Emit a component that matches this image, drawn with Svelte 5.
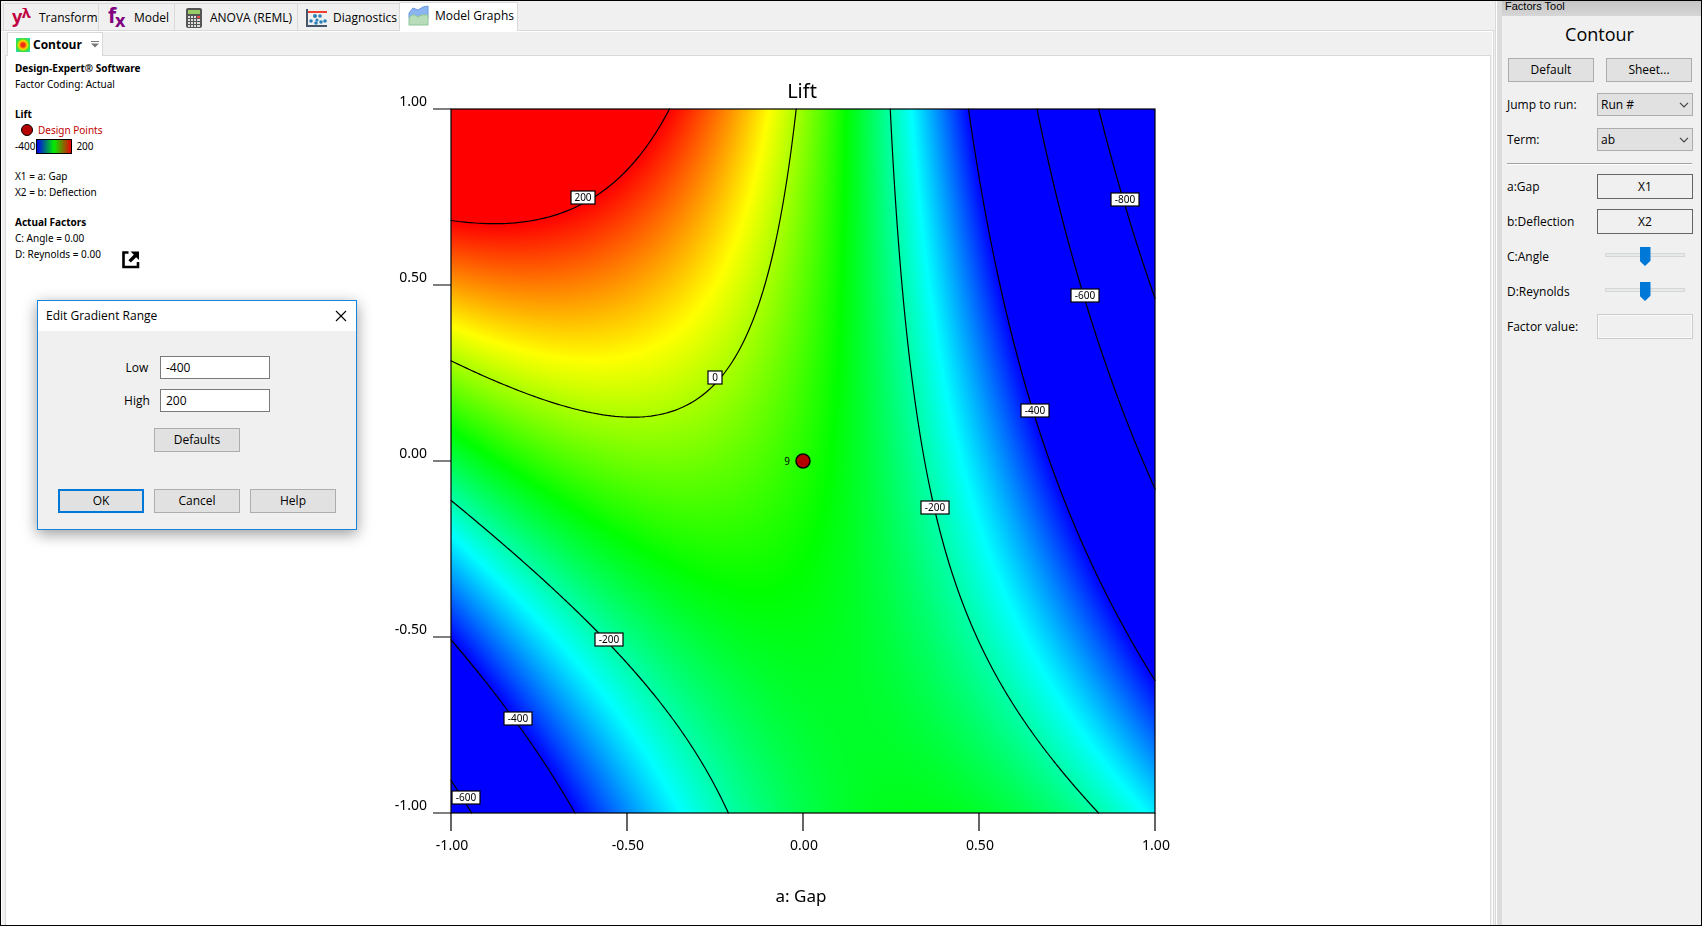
<script>
  import { onMount } from 'svelte';

  // Samples of the response surface, in thirds of a plot unit (0..2112 on each axis).
  const SPAN = 2112;
  const samples = [
    [200, 1, [655,0, 609,78, 577,127, 529,184, 479,230, 433,263, 394,284, 349,306, 299,322, 252,334, 199,341, 129,345, 59,342, 0,335]],
    [0, 1, [1035,0, 1023,107, 1010,197, 999,272, 977,392, 949,502, 919,597, 889,672, 854,740, 815,800, 791,830, 744,870, 694,899, 639,917, 601,925, 544,928, 479,923, 402,909, 319,886, 229,855, 149,822, 99,800, 0,755]],
    [-200, 1, [1318,0, 1324,132, 1332,262, 1344,422, 1357,572, 1377,772, 1389,882, 1420,1058, 1443,1174, 1453,1216, 1487,1338, 1525,1448, 1585,1603, 1655,1738, 1705,1823, 1785,1933, 1855,2013, 1940,2112]],
    [-400, 1, [1553,0, 1575,137, 1595,262, 1625,412, 1660,582, 1695,722, 1738,884, 1753,927, 1795,1058, 1855,1213, 1925,1368, 2005,1523, 2065,1638, 2112,1712]],
    [-600, 1, [1758,0, 1795,172, 1835,332, 1891,542, 1905,584, 1955,732, 2015,902, 2075,1058, 2112,1138]],
    [-800, 1, [1944,0, 1975,127, 2011,252, 2023,294, 2065,432, 2112,570]],
    [-200, 1, [0,1176, 79,1238, 199,1343, 309,1443, 435,1570, 477,1612, 579,1723, 659,1823, 729,1928, 789,2023, 835,2112]],
    [-400, 1, [0,1595, 79,1683, 169,1806, 201,1851, 279,1958, 339,2050, 373,2112]],
    [-600, 1, [0,2016, 19,2046, 49,2088, 62,2112]],
    [50, 0.3, [954,0, 919,142, 884,292, 819,467, 759,582, 669,667, 569,727, 479,747, 369,740, 219,717, 69,672, 0,642]],
    [-100, 0.3, [1180,0, 1173,372, 1160,572, 1150,772, 1135,972, 1115,1158, 1095,1268, 419,1223, 529,1288, 669,1368, 799,1418, 919,1438]],
    [-250, 0.3, [1375,0, 1400,222, 1430,472, 1460,672, 1490,872, 1535,1058, 1590,1258, 1640,1388, 1710,1568, 1815,1758, 1915,1908, 2085,2108, 0,1283, 189,1443, 389,1658, 529,1818, 679,2112]],
    [-106, 0.3, [1355,2108]],
    [-140, 0.2, [1055,2108]],
    [-78, 0.3, [1056,1056]]
  ];

  const powers = [];
  for (let i = 0; i <= 4; i++) for (let j = 0; i + j <= 4; j++) powers.push([i, j]);
  const terms = (a, b) => powers.map(([i, j]) => a ** i * b ** j);

  // Weighted least squares through the normal equations.
  function fit() {
    const n = powers.length;
    const m = Array.from({ length: n }, () => new Array(n + 1).fill(0));
    for (const [value, weight, pts] of samples) {
      for (let k = 0; k < pts.length; k += 2) {
        const t = terms((pts[k] / SPAN) * 2 - 1, 1 - (pts[k + 1] / SPAN) * 2);
        for (let r = 0; r < n; r++) {
          for (let c = 0; c < n; c++) m[r][c] += weight * t[r] * t[c];
          m[r][n] += weight * t[r] * value;
        }
      }
    }
    for (let c = 0; c < n; c++) {
      let p = c;
      for (let r = c + 1; r < n; r++) if (Math.abs(m[r][c]) > Math.abs(m[p][c])) p = r;
      [m[c], m[p]] = [m[p], m[c]];
      for (let r = 0; r < n; r++) {
        if (r === c) continue;
        const f = m[r][c] / m[c][c];
        for (let k = c; k <= n; k++) m[r][k] -= f * m[c][k];
      }
    }
    return m.map((row, i) => row[n] / row[i]);
  }
  const coef = fit();
  function lift(a, b) {
    let s = 0;
    for (let k = 0; k < powers.length; k++) s += coef[k] * a ** powers[k][0] * b ** powers[k][1];
    return s;
  }

  const SIZE = 704;
  const CELLS = 176;
  const grid = [];
  for (let r = 0; r <= CELLS; r++) {
    const row = [];
    for (let c = 0; c <= CELLS; c++) row.push(lift((c / CELLS) * 2 - 1, 1 - (r / CELLS) * 2));
    grid.push(row);
  }

  function isoline(level) {
    const u = SIZE / CELLS;
    let d = '';
    for (let r = 0; r < CELLS; r++) {
      for (let c = 0; c < CELLS; c++) {
        const corners = [[c, r], [c + 1, r], [c + 1, r + 1], [c, r + 1]];
        const hits = [];
        for (let e = 0; e < 4; e++) {
          const [x0, y0] = corners[e];
          const [x1, y1] = corners[(e + 1) % 4];
          const v0 = grid[y0][x0] - level;
          const v1 = grid[y1][x1] - level;
          if (v0 < 0 !== v1 < 0) {
            const t = v0 / (v0 - v1);
            hits.push(`${((x0 + (x1 - x0) * t) * u).toFixed(2)} ${((y0 + (y1 - y0) * t) * u).toFixed(2)}`);
          }
        }
        if (hits.length >= 2) d += `M${hits[0]}L${hits[1]}`;
      }
    }
    return d;
  }
  const isolines = [200, 0, -200, -400, -600, -800].map(isoline);

  let low = $state('-400');
  let high = $state('200');
  let canvas;

  onMount(() => {
    const ctx = canvas.getContext('2d');
    const img = ctx.createImageData(SIZE, SIZE);
    const clamp = (v) => Math.max(0, Math.min(1, v));
    for (let y = 0; y < SIZE; y++) {
      for (let x = 0; x < SIZE; x++) {
        const v = lift((x / SIZE) * 2 - 1, 1 - (y / SIZE) * 2);
        const t = clamp((v - Number(low)) / (Number(high) - Number(low))) * 4;
        const k = (y * SIZE + x) * 4;
        img.data[k] = 255 * clamp(t - 2);
        img.data[k + 1] = 255 * Math.min(clamp(t), clamp(4 - t));
        img.data[k + 2] = 255 * clamp(2 - t);
        img.data[k + 3] = 255;
      }
    }
    ctx.putImageData(img, 0, 0);
  });

  const ticks = [0, 1, 2, 3, 4].map((i) => ({ at: i * 176, x: (i / 2 - 1).toFixed(2), y: (1 - i / 2).toFixed(2) }));
  const flags = [
    [200, 132, 89], [0, 264, 269], [-800, 674, 91], [-600, 634, 187], [-400, 584, 302],
    [-200, 484, 399], [-200, 158, 531], [-400, 67, 610], [-600, 15, 689]
  ];
</script>

<div class="app">
  <main>
    <nav class="tabs">
      <button style:width="95px">
        <svg width="22" height="20" viewBox="0 0 22 20" fill="#c00040" font-family="Noto Sans" font-weight="700"><text x="0" y="15" font-size="18">y</text><text x="10" y="10" font-size="15">λ</text></svg>
        Transform
      </button>
      <button style:width="76px">
        <svg width="22" height="22" viewBox="0 0 22 22" fill="#800080" font-family="Noto Sans" font-weight="700"><text x="1" y="16" font-size="21">f</text><text x="8" y="20" font-size="18">x</text></svg>
        Model
      </button>
      <button style:width="123px">
        <svg width="22" height="22" viewBox="-2 0 22 22"><rect x="1" y="1" width="16" height="20" rx="2" fill="#555" /><rect x="3" y="3" width="12" height="4" fill="#9c6" /><g fill="#ddd"><path d="M3 9h2v2H3zM6 9h2v2H6zM9 9h2v2H9zM3 12h2v2H3zM6 12h2v2H6zM9 12h2v2H9zM12 12h3v2h-3zM3 15h2v2H3zM6 15h2v2H6zM9 15h2v2H9zM12 15h3v2h-3zM3 18h2v2H3zM6 18h2v2H6zM9 18h2v2H9zM12 18h3v2h-3z" /></g><path d="M12 9h3v2h-3z" fill="#e44" /></svg>
        ANOVA (REML)
      </button>
      <button style:width="102px">
        <svg width="22" height="20" viewBox="0 0 22 20"><path d="M1 4h20" stroke="#f04030" stroke-width="2" /><path d="M1 1v17h20" fill="none" stroke="#445568" stroke-width="2" /><g fill="#2980b9"><circle cx="5" cy="13" r="1.800" /><circle cx="9" cy="8" r="2" /><circle cx="10" cy="15" r="1.800" /><circle cx="11" cy="12" r="1.600" /><circle cx="14" cy="8" r="1.800" /><circle cx="15" cy="14" r="1.800" /><circle cx="19" cy="13" r="1.800" /></g></svg>
        Diagnostics
      </button>
      <button class="on" style:width="119px">
        <svg width="22" height="22" viewBox="0 0 22 22"><path d="M1 8 5 3l5 2 5-3 5-1v12H1z" fill="#8ab4f0" stroke="#6a9ae0" /><path d="M1 13c3-4 5-4 9-1 4-3 6-2 10-2v10H1z" fill="#b7dcb9" stroke="#8cc49a" /></svg>
        Model Graphs
      </button>
    </nav>
    <div class="outer">
      <div class="subtabs">
        <button><i class="spot"></i>Contour<svg class="drop" width="8" height="7" viewBox="0 0 8 7"><path d="M0 .5h8" stroke="#777" /><path d="M0 2.500h8L4 6.500z" fill="#777" /></svg></button>
      </div>
      <div class="sheet">
        <section class="legend">
          <div><b>Design-Expert® Software</b><span>Factor Coding: Actual</span></div>
          <div>
            <b>Lift</b>
            <span class="pts"><i></i>Design Points</span>
            <span class="ramp">-400<i></i>200</span>
          </div>
          <div><span>X1 = a: Gap</span><span>X2 = b: Deflection</span></div>
          <div><b>Actual Factors</b><span>C: Angle = 0.00</span>
            <span class="last">D: Reynolds = 0.00
              <svg width="18" height="18" viewBox="0 0 18 18"><path d="M6.500 1.500h-5v14.500h14.500v-5" fill="none" stroke="#000" stroke-width="2.600" /><path d="M8.500 0.500H17v8.500l-2.800-2.800-5.400 5.400-2.400-2.400 5.400-5.400z" /></svg>
            </span>
          </div>
        </section>
        <figure>
          <div class="plot">
            <canvas bind:this={canvas} width={SIZE} height={SIZE}></canvas>
            <svg viewBox="0 0 704 704">
              <g fill="none" stroke="#000" stroke-width="1.200" stroke-linecap="round">
                {#each isolines as d}<path {d} />{/each}
              </g>
              <rect x="0" y="0" width="704" height="704" fill="none" stroke="#000" stroke-width="1.200" />
              {#each ticks as t}
                <path d="M-18 {t.at}H0M{t.at} 704v18" stroke="#000" stroke-width="1.200" />
                <text class="num" x="-24" y={t.at - 3} text-anchor="end">{t.y}</text>
                <text class="num" x={t.at + 1} y="741" text-anchor="middle">{t.x}</text>
              {/each}
              {#each flags as [v, x, y]}
                {@const w = v < 0 ? 28 : v ? 24 : 14}
                <rect x={x - w / 2} y={y - 7} width={w} height="13" fill="#fff" stroke="#000" stroke-width="1.200" />
                <text class="flag" {x} y={y + 3} text-anchor="middle">{v}</text>
              {/each}
              <text class="flag" x="336" y="356" text-anchor="middle">9</text>
              <circle cx="352" cy="352" r="7" fill="#b40000" stroke="#000" stroke-width="1.500" />
              <text class="title" x="351" y="-11" text-anchor="middle">Lift</text>
              <text class="axis" x="350" y="793" text-anchor="middle">a: Gap</text>
            </svg>
          </div>
        </figure>
      </div>
    </div>
  </main>

  <aside>
    <header>Factors Tool</header>
    <h2>Contour</h2>
    <div class="pair"><button class="btn">Default</button><button class="btn">Sheet...</button></div>
    <div class="row"><label for="run">Jump to run:</label>
      <span class="sel"><select id="run"><option>Run #</option></select><svg width="10" height="6" viewBox="0 0 10 6"><path d="M1 .8 5 4.800l4-4" fill="none" stroke="#444" stroke-width="1.200" /></svg></span></div>
    <div class="row"><label for="term">Term:</label>
      <span class="sel"><select id="term"><option>ab</option></select><svg width="10" height="6" viewBox="0 0 10 6"><path d="M1 .8 5 4.800l4-4" fill="none" stroke="#444" stroke-width="1.200" /></svg></span></div>
    <hr />
    <div class="row"><label for="gap">a:Gap</label><button id="gap" class="axisbtn">X1</button></div>
    <div class="row"><label for="defl">b:Deflection</label><button id="defl" class="axisbtn">X2</button></div>
    <div class="row"><label for="angle">C:Angle</label><input id="angle" type="range" min="-1" max="1" step="0.01" value="0" /></div>
    <div class="row"><label for="rey">D:Reynolds</label><input id="rey" type="range" min="-1" max="1" step="0.01" value="0" /></div>
    <div class="row"><label for="fv">Factor value:</label><input id="fv" class="fv" type="text" disabled /></div>
  </aside>

  <div class="dialog" role="dialog" aria-labelledby="dlg-title">
    <div class="bar"><span id="dlg-title">Edit Gradient Range</span>
      <button aria-label="Close"><svg width="12" height="12" viewBox="0 0 12 12"><path d="M1 1l10 10M11 1 1 11" stroke="#000" stroke-width="1.100" /></svg></button></div>
    <div class="body">
      <div class="field"><label for="low">Low</label><input id="low" type="text" bind:value={low} /></div>
      <div class="field"><label for="high">High</label><input id="high" type="text" bind:value={high} /></div>
      <button class="btn defaults">Defaults</button>
      <div class="actions"><button class="btn primary">OK</button><button class="btn">Cancel</button><button class="btn">Help</button></div>
    </div>
  </div>
</div>

<style>
  :global(body) { margin: 0; }
  .app, .app * { box-sizing: border-box; }
  .app { position: relative; display: flex; height: 100vh; overflow: hidden; border: 1px solid #000; background: #f0f0f0; color: #000; font: 12px/16px "Noto Sans", "Open Sans", sans-serif; }
  button, input, select { font: inherit; color: inherit; margin: 0; }
  i { display: inline-block; }
  main { flex: 1; min-width: 0; display: flex; flex-direction: column; padding: 1px 3px 0 0; }
  .tabs { display: flex; align-items: flex-end; padding-left: 2px; height: 28px; }
  .tabs button { display: flex; align-items: center; gap: 5px; height: 27px; padding: 2px 0 0 8px; border: 1px solid #d9d9d9; border-right: 0; border-bottom: 0; background: #f0f0f0; white-space: nowrap; font-family: "Open Sans", sans-serif; }
  .tabs svg { flex: none; }
  .tabs .on { height: 29px; margin-bottom: -1px; padding: 0 0 2px 8px; background: #fff; border-right: 1px solid #d9d9d9; z-index: 1; }
  .outer { flex: 1; min-height: 0; display: flex; flex-direction: column; padding: 1px 2px 0 2px; border: 1px solid #d9d9d9; border-width: 1px 1px 0 0; box-shadow: inset 1px 1px #fff, inset -1px 0 #fff; }
  .subtabs { height: 23px; padding-left: 4px; }
  .subtabs button { display: flex; align-items: center; gap: 3px; width: 96px; height: 24px; padding: 0 3px 0 8px; position: relative; z-index: 1; border: 1px solid #d9d9d9; border-bottom: 0; background: #fff; font-family: "Open Sans", sans-serif; font-weight: 700; }
  .spot { flex: none; width: 14px; height: 14px; background: radial-gradient(circle, #f03010 20%, #ff9010 32%, #f0e000 45%, #40e030 62%, #20d8e0 100%); }
  .drop { margin-left: auto; }
  .sheet { flex: 1; min-height: 0; display: flex; margin-left: 2px; border: 1px solid #d9d9d9; border-bottom: 0; background: #fff; }
  .legend { width: 160px; padding: 4px 0 0 9px; font-size: 10px; line-height: 16px; display: flex; flex-direction: column; gap: 14px; }
  .legend b, .legend span { display: flex; align-items: center; height: 16px; white-space: nowrap; }
  .pts { color: #c00000; }
  .pts i { width: 12px; height: 12px; margin: 0 5px 0 6px; border: 1px solid #000; border-radius: 50%; background: #b40000; }
  .ramp i { width: 36px; height: 15px; margin: 0 4px 0 1px; border: 1px solid #000; background: linear-gradient(90deg, #00e, #0e0 50%, #e00); }
  .legend .last svg { margin: 12px 0 0 21px; flex: none; }
  figure { flex: 1; min-width: 0; margin: 0; padding: 53px 51px 0 0; }
  .plot { position: relative; width: min(100% - 80px, 100vh - 222px); aspect-ratio: 1; margin: 0 auto; }
  .plot canvas, .plot svg { position: absolute; inset: 0; width: 100%; height: 100%; overflow: visible; }
  .num { font-size: 14px; }
  .flag { font-size: 10px; }
  .title { font-size: 20px; }
  .axis { font-size: 17px; }

  aside { width: 204px; padding-right: 8px; border-left: 5px solid #dcdcdc; box-shadow: -1px 0 #fff, -2px 0 #d9d9d9; font-family: "Open Sans", sans-serif; }
  header { margin-right: -8px; height: 15px; padding-left: 3px; background: linear-gradient(#c4c4c4, #d6d6d6); font: 11px/11px "Liberation Sans", sans-serif; }
  h2 { margin: 4px 0 10px; padding-left: 4px; font-size: 18px; font-weight: 400; line-height: 28px; text-align: center; }
  .btn { width: 86px; height: 24px; padding: 0; border: 1px solid #adadad; background: #e1e1e1; }
  .pair { display: flex; justify-content: space-between; padding: 0 1px 0 6px; margin-bottom: 5px; }
  .row { display: flex; align-items: center; justify-content: space-between; height: 35px; padding-left: 5px; }
  .sel { position: relative; width: 96px; height: 23px; }
  .sel select { appearance: none; width: 100%; height: 100%; padding: 0 3px; border: 1px solid #adadad; border-radius: 0; background: #e1e1e1; }
  .sel svg { position: absolute; right: 4px; top: 9px; pointer-events: none; }
  hr { margin: 6px 1px 4px 5px; border: 0; border-top: 1px solid #a0a0a0; border-bottom: 1px solid #fff; }
  .axisbtn { width: 96px; height: 25px; padding: 0; border: 1px solid #666; background: #f0f0f0; }
  .fv { width: 96px; height: 25px; border: 1px solid #ccc; background: #f0f0f0; box-shadow: inset 0 0 0 1px #fafafa; }
  input[type='range'] { appearance: none; width: 80px; height: 20px; margin-right: 8px; background: linear-gradient(#e7eaea, #e7eaea) 1px 7px / 78px 2px no-repeat, linear-gradient(#d6d6d6, #d6d6d6) 0 6px / 100% 4px no-repeat; }
  input[type='range']::-webkit-slider-thumb { appearance: none; width: 11px; height: 19px; background: #0078d7; clip-path: polygon(0 0, 100% 0, 100% 72%, 50% 100%, 0 72%); }

  .dialog { position: absolute; left: 36px; top: 299px; width: 320px; border: 1px solid #1883d7; background: #f0f0f0; box-shadow: 0 4px 14px rgba(0, 0, 0, 0.4); font-family: "Open Sans", sans-serif; }
  .bar { display: flex; align-items: center; justify-content: space-between; height: 30px; padding: 0 9px 0 8px; background: #fff; }
  .bar button { display: flex; padding: 0; border: 0; background: none; }
  .body { display: flex; flex-direction: column; align-items: center; padding: 25px 20px 16px; }
  .field { display: flex; align-items: center; align-self: flex-start; margin: 0 0 10px 64px; }
  .field label { width: 30px; margin-right: 8px; text-align: center; }
  .field input { width: 110px; height: 23px; padding: 0 5px; border: 1px solid #7a7a7a; background: #fff; outline: 0; }
  .defaults { margin: 6px 0 37px; }
  .actions { display: flex; gap: 10px; align-self: flex-start; }
  .primary { border: 2px solid #0078d7; }
</style>
